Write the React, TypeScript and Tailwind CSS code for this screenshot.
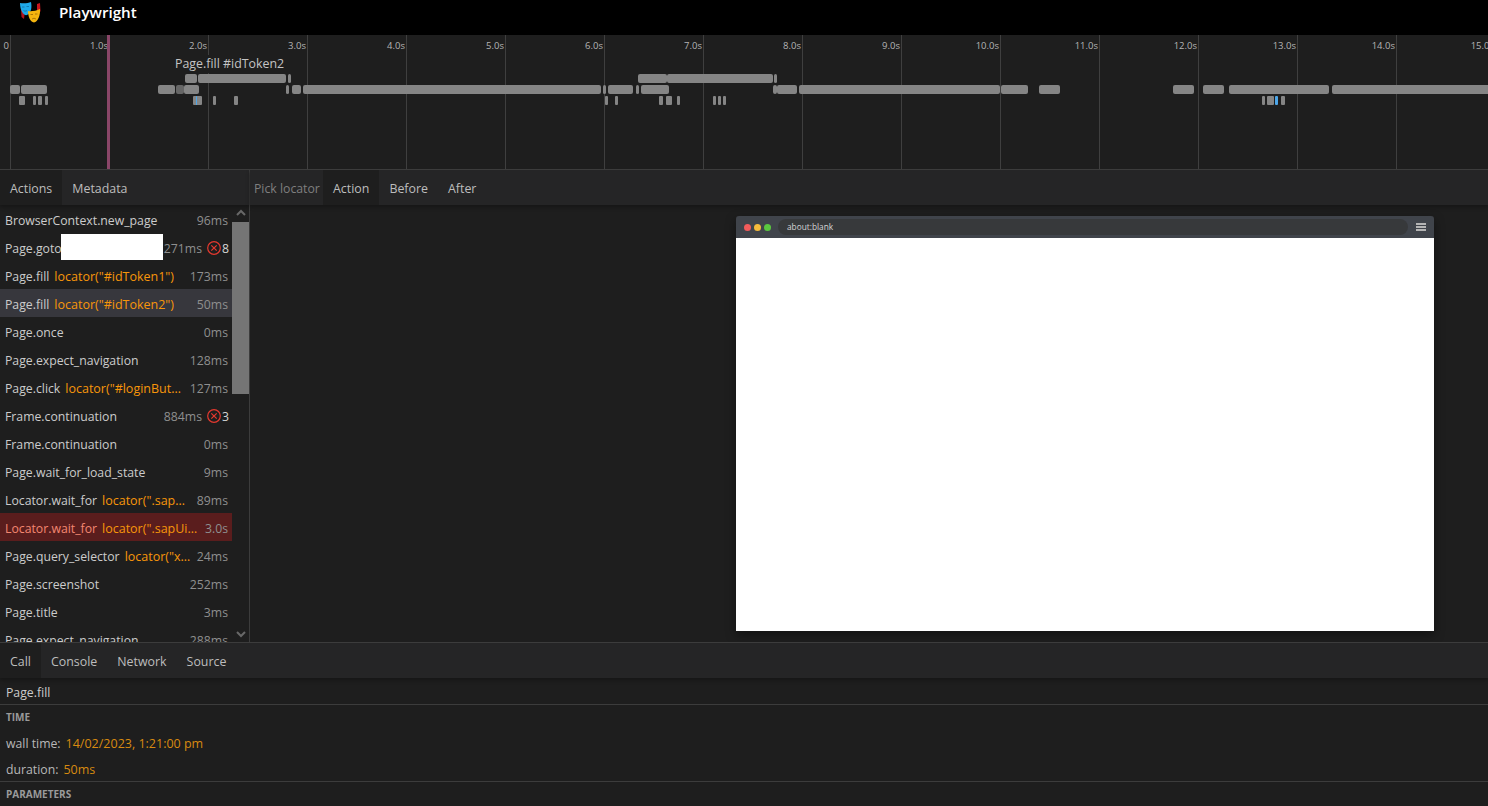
import React from "react";

type Bar = [number, number, string?];

const GREY = "#858585";
const DARK = "#666666";
const BLUE = "#4da6e8";

const row1: Bar[] = [
  [185, 197],
  [198, 286],
  [288, 291],
  [638, 667],
  [667, 773],
  [774, 777],
];

const row2: Bar[] = [
  [10, 20],
  [21, 47],
  [158, 175],
  [176, 184, DARK],
  [184, 199],
  [286, 289],
  [292, 301],
  [303, 601],
  [603, 606],
  [608, 633],
  [636, 639],
  [641, 669],
  [773, 777],
  [777, 797],
  [799, 1000],
  [1001, 1028],
  [1039, 1060],
  [1173, 1194],
  [1203, 1224],
  [1229, 1329],
  [1332, 1500],
];

const row3: Bar[] = [
  [19, 25],
  [33, 36],
  [38, 42],
  [45, 48],
  [193, 202],
  [196, 197, BLUE],
  [213, 216],
  [234, 238],
  [605, 608],
  [615, 618],
  [659, 663],
  [666, 672],
  [677, 680],
  [713, 716],
  [718, 721],
  [723, 726],
  [1262, 1265],
  [1267, 1274],
  [1275, 1278, BLUE],
  [1281, 1285],
];

const ticks = Array.from({ length: 16 }, (_, i) => i);

function BarRow({ bars, top, small }: { bars: Bar[]; top: number; small?: boolean }) {
  return (
    <>
      {bars.map(([from, to, color], i) => (
        <div
          key={i}
          className={`absolute h-[9px] ${small ? "rounded-[1px]" : "rounded-[2px]"}`}
          style={{ left: from, top, width: to - from, background: color ?? GREY }}
        />
      ))}
    </>
  );
}

function Timeline() {
  return (
    <div className="relative h-[135px] shrink-0 overflow-hidden border-b border-[#3c3c3c] bg-[#1e1e1e]">
      {ticks.map((t) => {
        const x = 10 + t * 99;
        return (
          <React.Fragment key={t}>
            <div className="absolute top-0 bottom-0 w-px bg-[#3f3f3f]" style={{ left: x }} />
            <div
              className="absolute top-[4px] w-[40px] text-right text-[9.5px] leading-[13px] text-[#b4b4b4]"
              style={{ left: x - 41 }}
            >
              {t === 0 ? "0" : `${t}.0s`}
            </div>
          </React.Fragment>
        );
      })}
      <BarRow bars={row1} top={39} />
      <BarRow bars={row2} top={50} />
      <BarRow bars={row3} top={61} small />
      <div className="absolute top-0 bottom-0 left-[107px] w-[3px] bg-[#8a4668]" />
      <div className="absolute top-[20px] left-[175px] bg-[#1e1e1e] text-[12.4px] leading-[18px] text-[#c4c4c4]">
        Page.fill #idToken2
      </div>
    </div>
  );
}

function Tab({ label, active }: { label: string; active?: boolean }) {
  return (
    <div
      className={`flex h-full items-center px-[10px] pt-[3px] text-[12.4px] text-[#bdbdbd] ${active ? "bg-[#1e1e1e]" : ""}`}
    >
      {label}
    </div>
  );
}

function ErrorBadge({ count }: { count: number }) {
  return (
    <div className="-mr-px ml-[5px] flex shrink-0 items-center text-[#d4d4d4]">
      <svg width="14" height="14" viewBox="0 0 14 14" fill="none" stroke="#e5392f" strokeWidth="1.2" className="-mt-[3px]">
        <circle cx="7" cy="7" r="6.3" />
        <path d="M4.3 4.3l5.4 5.4M9.7 4.3l-5.4 5.4" />
      </svg>
      <span className="ml-px">{count}</span>
    </div>
  );
}

type Action = {
  name: string;
  locator?: string;
  time: string;
  errors?: number;
  state?: "selected" | "failed";
  redacted?: boolean;
};

const actions: Action[] = [
  { name: "BrowserContext.new_page", time: "96ms" },
  { name: "Page.goto", time: "271ms", errors: 8, redacted: true },
  { name: "Page.fill", locator: 'locator("#idToken1")', time: "173ms" },
  { name: "Page.fill", locator: 'locator("#idToken2")', time: "50ms", state: "selected" },
  { name: "Page.once", time: "0ms" },
  { name: "Page.expect_navigation", time: "128ms" },
  { name: "Page.click", locator: 'locator("#loginButton_0")', time: "127ms" },
  { name: "Frame.continuation", time: "884ms", errors: 3 },
  { name: "Frame.continuation", time: "0ms" },
  { name: "Page.wait_for_load_state", time: "9ms" },
  { name: "Locator.wait_for", locator: 'locator(".sapUiBody")', time: "89ms" },
  { name: "Locator.wait_for", locator: 'locator(".sapUiBody")', time: "3.0s", state: "failed" },
  { name: "Page.query_selector", locator: 'locator("xpath=//a")', time: "24ms" },
  { name: "Page.screenshot", time: "252ms" },
  { name: "Page.title", time: "3ms" },
  { name: "Page.expect_navigation", time: "288ms" },
];

function ActionRow({ action }: { action: Action }) {
  const bg =
    action.state === "selected" ? "bg-[#37373d]" : action.state === "failed" ? "bg-[#5a1d1d]" : "";
  return (
    <div className={`relative flex h-[28px] shrink-0 items-center pt-[4px] pr-[4px] pl-[5px] text-[12.25px] whitespace-nowrap ${bg}`}>
      <span className={`shrink-0 ${action.state === "failed" ? "text-[#f48771]" : "text-[#cccccc]"}`}>
        {action.name}
      </span>
      {action.locator && (
        <span className="ml-[5px] min-w-0 truncate text-[12.5px] text-[#f7960a]">{action.locator}</span>
      )}
      <span className="ml-auto shrink-0 pl-[5px] text-[#8f8f8f]">{action.time}</span>
      {action.errors && <ErrorBadge count={action.errors} />}
      {action.redacted && <div className="absolute top-[1px] left-[61px] h-[26px] w-[102px] bg-white" />}
    </div>
  );
}

function ActionList() {
  return (
    <div className="flex w-[250px] shrink-0 flex-col border-r border-[#3c3c3c]">
      <div className="flex h-[35px] shrink-0 bg-[#252526] shadow-[0_2px_4px_rgba(0,0,0,0.3)]">
        <Tab label="Actions" active />
        <Tab label="Metadata" />
      </div>
      <div className="flex min-h-0 flex-1">
        <div className="flex w-[232px] shrink-0 flex-col overflow-hidden">
          {actions.map((a, i) => (
            <ActionRow key={i} action={a} />
          ))}
        </div>
        <div className="flex flex-1 flex-col items-center">
          <svg className="mt-[4px] h-[8px] w-[12px]" viewBox="0 0 12 8" fill="none" stroke="#686868" strokeWidth="2">
            <path d="M2 6l4-4 4 4" />
          </svg>
          <div className="mt-[5px] h-[172px] w-full bg-[#757575]" />
          <svg className="mt-auto mb-[4px] h-[8px] w-[12px]" viewBox="0 0 12 8" fill="none" stroke="#686868" strokeWidth="2">
            <path d="M2 2l4 4 4-4" />
          </svg>
        </div>
      </div>
    </div>
  );
}

function Snapshot() {
  return (
    <div className="flex min-w-0 flex-1 flex-col">
      <div className="flex h-[35px] shrink-0 bg-[#252526] shadow-[0_2px_4px_rgba(0,0,0,0.3)]">
        <div className="flex w-[73px] items-center pt-[3px] pl-[4px] text-[12.25px] whitespace-nowrap text-[#7f7f7f]">
          Pick locator
        </div>
        <Tab label="Action" active />
        <Tab label="Before" />
        <Tab label="After" />
      </div>
      <div className="flex flex-1 justify-end pt-[11px] pr-[54px]">
        <div className="flex h-[415px] w-[698px] flex-col shadow-[0_4px_10px_rgba(0,0,0,0.4)]">
          <div className="flex h-[22px] shrink-0 items-center rounded-t-[3px] bg-[#40444b] pr-[8px] pl-[8px]">
            <div className="h-[7px] w-[7px] rounded-full bg-[#f25b5b]" />
            <div className="ml-[3px] h-[7px] w-[7px] rounded-full bg-[#f5bb3c]" />
            <div className="ml-[3px] h-[7px] w-[7px] rounded-full bg-[#5ac83f]" />
            <div className="ml-[7px] flex h-[16px] flex-1 items-center rounded-full bg-[#37393b] pl-[9px] text-[8.3px] text-[#d5d5d5]">
              about:blank
            </div>
            <div className="ml-[8px] flex w-[10px] flex-col gap-[1px]">
              <div className="h-[2px] bg-[#b5b5b5]" />
              <div className="h-[2px] bg-[#b5b5b5]" />
              <div className="h-[2px] bg-[#b5b5b5]" />
            </div>
          </div>
          <div className="flex-1 bg-white" />
        </div>
      </div>
    </div>
  );
}

function CallLine({ label, value }: { label: string; value: string }) {
  return (
    <div className="flex h-[26px] items-center px-[6px] pt-[4px] text-[12.25px] whitespace-nowrap">
      <span className="text-[#b8b8b8]">{label}:</span>
      <span className="ml-[5px] text-[12.5px] text-[#d88a10]">{value}</span>
    </div>
  );
}

function SectionTitle({ children }: { children: string }) {
  return (
    <div className="flex h-[25px] items-center border-t border-[#3c3c3c] px-[6px] text-[10px] font-bold text-[#9a9a9a] uppercase">
      {children}
    </div>
  );
}

function CallPanel() {
  return (
    <div className="h-[164px] shrink-0 overflow-hidden border-t border-[#3c3c3c]">
      <div className="flex h-[35px] bg-[#252526] shadow-[0_2px_4px_rgba(0,0,0,0.3)]">
        <Tab label="Call" active />
        <Tab label="Console" />
        <Tab label="Network" />
        <Tab label="Source" />
      </div>
      <div className="flex h-[26px] items-center px-[6px] pt-[5px] text-[12.25px] text-[#cccccc]">Page.fill</div>
      <SectionTitle>Time</SectionTitle>
      <CallLine label="wall time" value="14/02/2023, 1:21:00 pm" />
      <CallLine label="duration" value="50ms" />
      <SectionTitle>Parameters</SectionTitle>
    </div>
  );
}

function Logo() {
  return (
    <svg width="24" height="24" viewBox="0 0 24 24">
      <path d="M2 8 L2.5 16 L5 18 L6 10 Z" fill="#b3141d" />
      <path d="M18 3 L21 2 L21.5 10 L20 13 L18 10 Z" fill="#c8161d" />
      <path d="M1 2 C4 2.5 9 2.5 12 1 C13 6 12.5 12 8 14 C5 15 1 10 1 2 Z" fill="#1ea8e8" />
      <path d="M9 10 C12 10.5 17 10 21 8 C21.5 14 19 21 15 21.5 C11 21 9 15 9 10 Z" fill="#f5b50f" />
      <path d="M11.5 13.5h2.5M16 13h2.5M13 18.2c1-1.2 3-1.2 4 0" stroke="#9a6a05" strokeWidth="0.8" fill="none" />
      <path d="M3 6h2.5M7.5 5.5h2.5M4.5 9.5c1 .8 2.5.8 3.5 0" stroke="#0f6fa0" strokeWidth="0.8" fill="none" />
    </svg>
  );
}

export default function App() {
  return (
    <div className="flex h-[806px] w-full flex-col overflow-hidden bg-[#1e1e1e] font-['Open_Sans',sans-serif]">
      <div className="flex h-[35px] shrink-0 items-start bg-black">
        <div className="mt-[1px] ml-[19px]">
          <Logo />
        </div>
        <div className="mt-[1px] ml-[16px] text-[15.2px] leading-[22px] font-semibold text-white">Playwright</div>
      </div>
      <Timeline />
      <div className="flex min-h-0 flex-1">
        <ActionList />
        <Snapshot />
      </div>
      <CallPanel />
    </div>
  );
}
